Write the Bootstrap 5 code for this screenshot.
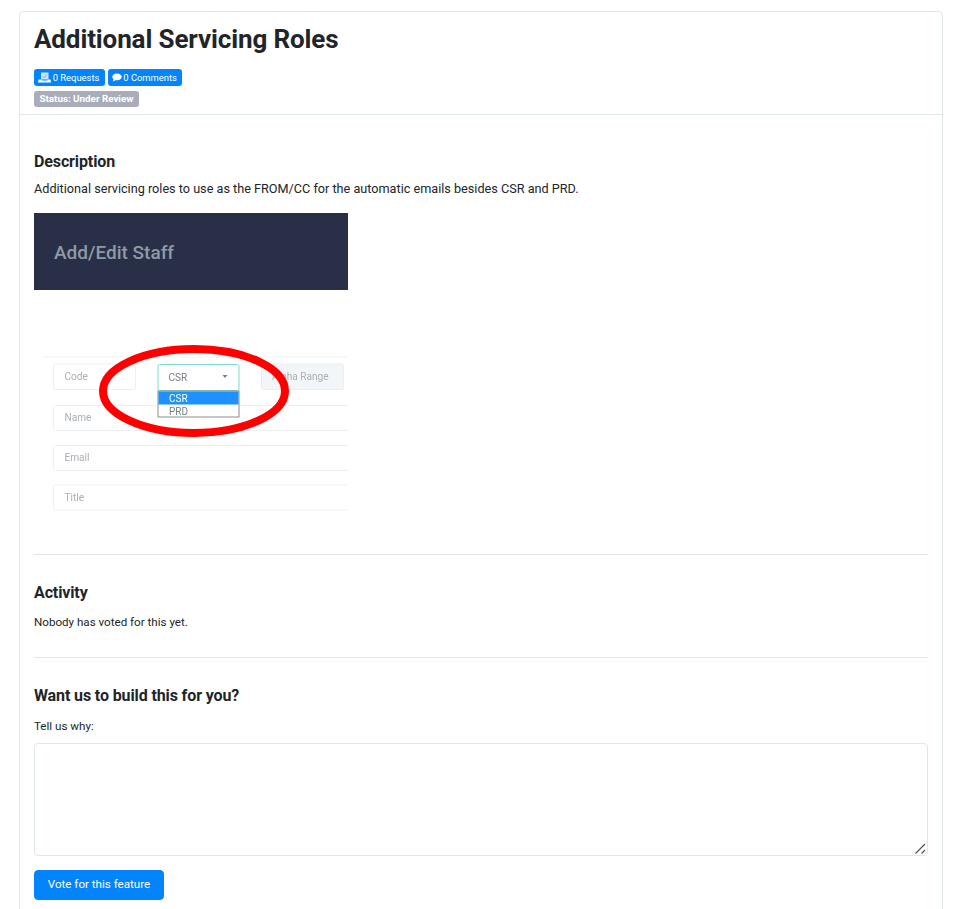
<!DOCTYPE html>
<html lang="en">
<head>
<meta charset="utf-8">
<title>Additional Servicing Roles</title>
<link href="https://cdn.jsdelivr.net/npm/bootstrap@5.3.0/dist/css/bootstrap.min.css" rel="stylesheet">
<style>
html,body{background:#fff;}
body{font-family:Roboto,"Liberation Sans",sans-serif;font-size:12px;color:#212529;height:909px;overflow:hidden;}
.page-wrap{padding:11px 16px 0 19px;}
.feature-card{border:1px solid #dfe8e7;border-radius:4px;height:1000px;}
.feature-head{padding:8px 14px 7px;border-bottom:1px solid #dfe8e7;}
.feature-head h1{font-size:26px;font-weight:700;line-height:39px;margin:0 0 10px;letter-spacing:-.12px;color:#212529;}
.pill-row{display:flex;gap:3px;margin-bottom:5px;}
.pill-row:last-child{margin-bottom:0;}
.tag{display:inline-flex;align-items:center;gap:1.5px;height:17px;padding:0 5.25px 0 4.25px;border-radius:3px;font-size:9.4px;color:#fff;font-weight:400;line-height:1;}
.tag-blue{background:#0484fb;}
.tag-grey{background:#a9adb9;font-weight:700;font-size:9.8px;height:16px;padding:0 5.5px;}
.feature-body{padding:37px 14px 0;}
.feature-body h2{font-size:16px;font-weight:700;line-height:20px;margin:0;letter-spacing:-.12px;color:#212529;}
.lede{font-size:12.66px;line-height:18px;margin:8px 0 15px;color:#212529;}
.shot{display:block;width:314px;height:312px;}
.shot-soft{filter:blur(.35px);}
.rule{border:0;border-top:1px solid #dfe6e5;opacity:1;margin:0;}
.rule-a{margin-top:29px;}
.activity{padding-top:28px;}
.note{font-size:11.62px;line-height:18px;margin:10px 0 26px;}
.build{padding-top:28px;}
.why{display:block;font-size:11.62px;line-height:18px;margin:11px 0 8px;}
.why-wrap{position:relative;}
.why-box{display:block;width:100%;height:113px;border:1px solid #dfe8e7;border-radius:4px;box-shadow:none;padding:6px 12px;resize:none;}
.grip{position:absolute;right:2px;bottom:2px;display:block;}
.vote{display:block;margin-top:14px;height:30px;width:130px;padding:0;font-size:11.6px;border-radius:4px;background:#0484fb;border-color:#0484fb;color:#fff;}
</style>
</head>
<body>
<div class="page-wrap">
  <div class="feature-card bg-white">
    <div class="feature-head">
      <h1>Additional Servicing Roles</h1>
      <div class="pill-row">
        <span class="tag tag-blue">
          <svg width="13" height="11" viewBox="0 0 13 11" aria-hidden="true"><path fill="#cfe5ff" d="M3 0.5h7.5v7H3z"/><path fill="#fff" d="M0.5 7.5h2.5l1 1h5.2l1-1H12.5L13 10.5H0z"/><path fill="none" stroke="#5aa8ff" stroke-width="1" d="M5 4.5l1.2 1.3L8.6 2.8"/></svg>
          0 Requests</span>
        <span class="tag tag-blue">
          <svg width="10" height="9" viewBox="0 0 10 9" aria-hidden="true"><path fill="#fff" d="M5 .4c2.6 0 4.7 1.5 4.700 3.400S7.600 7.200 5 7.200c-.5 0-1 0-1.400-.2C3 7.700 1.800 8.500.6 8.500c.6-.7 1-1.400 1-2.200C.8 5.700.3 4.800.3 3.800.3 1.900 2.400.4 5 .4z"/></svg>
          0 Comments</span>
      </div>
      <div class="pill-row"><span class="tag tag-grey">Status: Under Review</span></div>
    </div>
    <div class="feature-body">
      <h2>Description</h2>
      <p class="lede">Additional servicing roles to use as the FROM/CC for the automatic emails besides CSR and PRD.</p>
      <svg class="shot" viewBox="0 0 314 312" role="img" aria-label="Add/Edit Staff form screenshot">
        <rect x="0" y="0" width="314" height="77" fill="#292f47"/>
        <text x="20" y="46" font-family="Roboto,sans-serif" font-size="19" font-weight="500" fill="#8d9ba6">Add/Edit Staff</text>
        <line x1="8" y1="144" x2="314" y2="144" stroke="#f0f2f3" stroke-width="1"/>
        <g fill="#fff" stroke="#edf0f2">
          <rect x="19.500" y="151" width="82" height="25.500" rx="2"/>
          <path d="M314 192.500H21.500a2 2 0 0 0-2 2v21a2 2 0 0 0 2 2H314"/>
          <path d="M314 232.500H21.500a2 2 0 0 0-2 2v21a2 2 0 0 0 2 2H314"/>
          <path d="M314 272H21.500a2 2 0 0 0-2 2v21a2 2 0 0 0 2 2H314"/>
        </g>
        <rect x="227.500" y="151" width="82" height="25.500" rx="2" fill="#f3f6f8" stroke="#e9eef1"/>
        <g class="shot-soft" font-family="Roboto,sans-serif" font-size="10.100" fill="#a8afb6">
          <text x="30.500" y="167">Code</text>
          <text x="30.500" y="208">Name</text>
          <text x="30.500" y="247.500">Email</text>
          <text x="30.500" y="287.500">Title</text>
          <text x="238" y="167">Alpha Range</text>
        </g>
        <rect x="124" y="151.500" width="81" height="26" rx="1.500" fill="#fff" stroke="#7fdccb"/>
        <text class="shot-soft" x="134.500" y="167.500" font-family="Roboto,sans-serif" font-size="10" fill="#777d84">CSR</text>
        <path d="M188.500 162h5l-2.500 3z" fill="#777d84"/>
        <rect x="124" y="178" width="81" height="26" fill="#fff" stroke="#8b8b8b"/>
        <rect x="124.500" y="178.500" width="80" height="13" fill="#1e90ff"/>
        <text class="shot-soft" x="135" y="188.500" font-family="Roboto,sans-serif" font-size="10" fill="#fff">CSR</text>
        <text class="shot-soft" x="135" y="201.500" font-family="Roboto,sans-serif" font-size="10" fill="#777d84">PRD</text>
        <ellipse cx="160" cy="178" rx="91" ry="42" fill="none" stroke="#fe0000" stroke-width="8"/>
      </svg>
      <hr class="rule rule-a">
      <div class="activity">
        <h2>Activity</h2>
        <p class="note">Nobody has voted for this yet.</p>
      </div>
      <hr class="rule">
      <div class="build">
        <h2>Want us to build this for you?</h2>
        <label class="why" for="why">Tell us why:</label>
        <div class="why-wrap">
          <textarea class="form-control why-box" id="why"></textarea>
          <svg class="grip" width="11" height="11" viewBox="0 0 11 11" aria-hidden="true"><path d="M.5 10.500L10 1M6.500 10.500L10 7" stroke="#555" stroke-width="1.200" fill="none"/></svg>
        </div>
        <button type="button" class="btn btn-primary vote">Vote for this feature</button>
      </div>
    </div>
  </div>
</div>
<script src="https://cdn.jsdelivr.net/npm/bootstrap@5.3.0/dist/js/bootstrap.bundle.min.js"></script>
</body>
</html>
